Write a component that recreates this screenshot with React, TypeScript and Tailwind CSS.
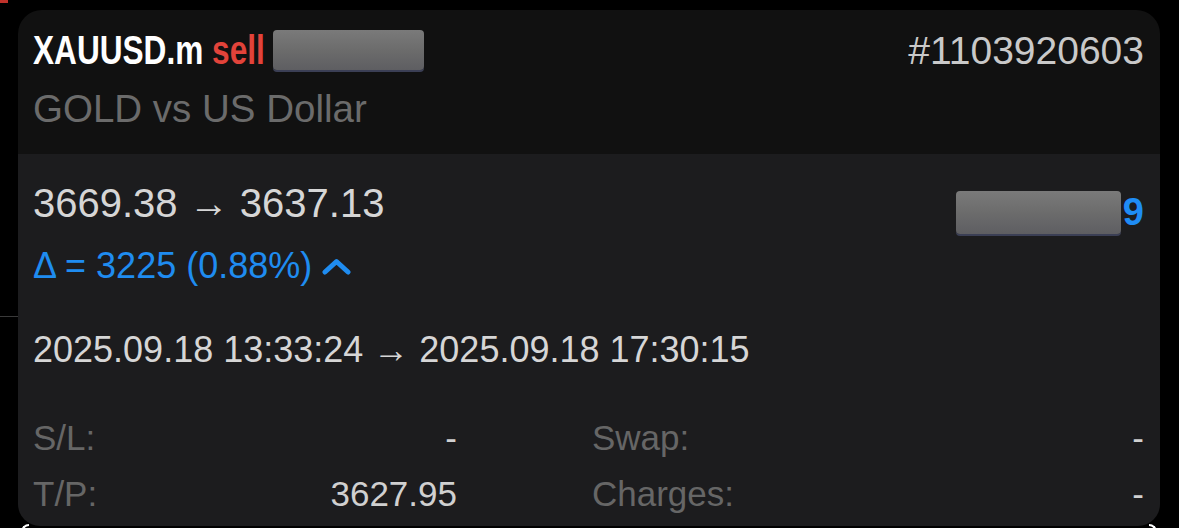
import React from "react";

const sans = { fontFamily: '"Liberation Sans", Arial, sans-serif' };

function Blur({ className }: { className: string }) {
  return (
    <div
      className={`rounded-[4px] bg-gradient-to-b from-[#7a7a7a] via-[#6c6c6c] to-[#5e5e62] shadow-[0_2px_0_#3b3f55] ${className}`}
    />
  );
}

export default function App() {
  const rows = [
    { label: "S/L:", value: "-", label2: "Swap:", value2: "-" },
    { label: "T/P:", value: "3627.95", label2: "Charges:", value2: "-" },
  ];

  return (
    <div className="relative h-[528px] w-[1179px] overflow-hidden bg-black" style={sans}>
      <div className="absolute left-0 top-0 h-[3px] w-[8px] bg-[#c0322b]" />
      <div className="absolute left-0 top-[316px] h-px w-[18px] bg-[#3a3a3a]" />

      <div className="ml-[18px] mt-[10px] w-[1142px] overflow-hidden rounded-[24px] rounded-b-[22px]">
        {/* header */}
        <div className="h-[144px] bg-[#111111] px-[15px] pr-[16px] pt-[16px]">
          <div className="flex h-[48px] items-center justify-between">
            <div className="flex items-center">
              <span className="mr-[-62px] inline-block origin-left scale-x-[0.79] whitespace-nowrap text-[40px] font-bold leading-none">
                <span className="text-white">XAUUSD.m</span>{" "}
                <span className="text-[#e2433a]">sell</span>
              </span>
              <Blur className="ml-[9px] h-[40px] w-[151px]" />
            </div>
            <span className="text-[39px] leading-none text-[#c9c9c9]">#1103920603</span>
          </div>
          <div className="mt-[12px] flex h-[46px] items-center text-[38.5px] leading-none text-[#6b6b6b]">
            GOLD vs US Dollar
          </div>
        </div>

        {/* body */}
        <div className="bg-[#1c1c1e] px-[15px] pb-[11px] pr-[16px] pt-[25px]">
          <div className="flex h-[48px] items-start justify-between">
            <div className="flex h-[48px] items-center text-[40px] leading-none text-[#d6d6d6]">
              3669.38 → 3637.13
            </div>
            <div className="mt-[11px] flex h-[44px] items-center">
              <Blur className="h-[43px] w-[165px]" />
              <span className="ml-[2px] text-[38px] font-bold leading-none text-[#1f8cf5]">9</span>
            </div>
          </div>

          <div className="mt-[17px] flex h-[44px] items-center text-[36px] leading-none text-[#1f8cf0]">
            <span>Δ = 3225 (0.88%)</span>
            <svg className="ml-[10px]" width="29" height="17" viewBox="0 0 29 17">
              <polyline
                points="3,14 14.5,3.5 26,14"
                fill="none"
                stroke="#1f8cf0"
                strokeWidth="5"
                strokeLinecap="round"
                strokeLinejoin="round"
              />
            </svg>
          </div>

          <div className="mt-[40px] flex h-[44px] items-center text-[36px] leading-none text-[#d6d6d6]">
            2025.09.18 13:33:24 → 2025.09.18 17:30:15
          </div>

          <div className="mt-[43px] flex flex-col gap-y-[12px]">
            {rows.map((r) => (
              <div
                key={r.label}
                className="grid h-[44px] grid-cols-[424px_1fr] items-center gap-x-[135px] text-[35px] leading-none"
              >
                <div className="flex items-center justify-between">
                  <span className="text-[#666666]">{r.label}</span>
                  <span className="text-[#d0d0d0]">{r.value}</span>
                </div>
                <div className="flex items-center justify-between">
                  <span className="text-[#666666]">{r.label2}</span>
                  <span className="text-[#d0d0d0]">{r.value2}</span>
                </div>
              </div>
            ))}
          </div>
        </div>
      </div>

      <div className="absolute bottom-[-4px] left-[21px] h-[8px] w-[8px] rounded-tl-full border-l-2 border-t-2 border-white" />
      <div className="absolute bottom-[-4px] right-[22px] h-[8px] w-[8px] rounded-tr-full border-r-2 border-t-2 border-white" />
    </div>
  );
}
